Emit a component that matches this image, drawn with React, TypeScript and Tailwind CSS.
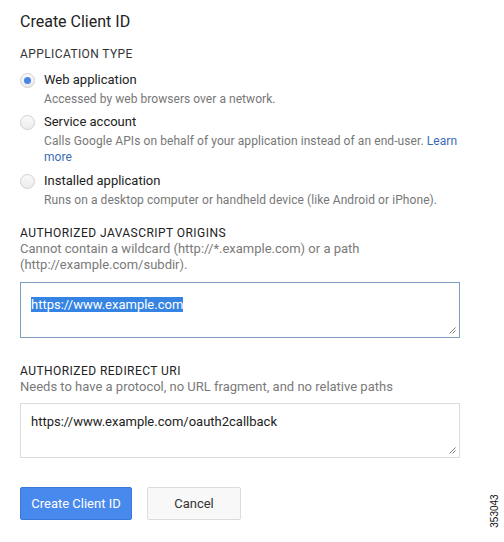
import React from "react";

const Grip = () => (
  <svg className="absolute right-[3px] bottom-[3px]" width="8" height="8" viewBox="0 0 8 8">
    <path d="M7.5 1.5 L1.5 7.5 M7.5 4.5 L4.5 7.5" stroke="#777" strokeWidth="1" />
  </svg>
);

const Radio = ({ checked }: { checked?: boolean }) => (
  <div className="w-[15px] h-[15px] rounded-full border border-[#d0d0d0] bg-gradient-to-b from-[#fafafa] to-[#ececec] flex items-center justify-center shrink-0 mt-[2px]">
    {checked && <div className="w-[7px] h-[7px] rounded-full bg-[#4a86e8]" />}
  </div>
);

export default function App() {
  return (
    <div
      className="relative w-[504px] h-[542px] bg-white pl-[20px] pt-[12px] text-[#222]"
      style={{ fontFamily: "Roboto, 'Liberation Sans', Arial, sans-serif" }}
    >
      <div className="text-[16px] leading-[20px] text-[#222]">Create Client ID</div>

      <div className="mt-[14px] text-[12px] leading-[16px] tracking-[0.4px] text-[#333]">APPLICATION TYPE</div>

      <div className="mt-[9px] flex gap-[9px]">
        <Radio checked />
        <div>
          <div className="text-[13px] leading-[18px] text-[#222]">Web application</div>
          <div className="mt-[2px] text-[12px] leading-[16px] tracking-[0.05px] text-[#777]">Accessed by web browsers over a network.</div>
        </div>
      </div>

      <div className="mt-[6px] flex gap-[9px]">
        <Radio />
        <div className="w-[420px]">
          <div className="text-[13px] leading-[18px] text-[#222]">Service account</div>
          <div className="mt-[2px] text-[12px] leading-[16px] tracking-[0.08px] text-[#777]">
            Calls Google APIs on behalf of your application instead of an end-user.{" "}
            <span className="text-[#3b6cb4]">Learn</span>
            <br />
            <span className="text-[#3b6cb4]">more</span>
          </div>
        </div>
      </div>

      <div className="mt-[7px] flex gap-[9px]">
        <Radio />
        <div>
          <div className="text-[13px] leading-[18px] text-[#222]">Installed application</div>
          <div className="mt-[2px] text-[12px] leading-[16px] tracking-[0.08px] text-[#777]">
            Runs on a desktop computer or handheld device (like Android or iPhone).
          </div>
        </div>
      </div>

      <div className="mt-[17px] text-[12px] leading-[16px] tracking-[0.45px] text-[#222]">AUTHORIZED JAVASCRIPT ORIGINS</div>
      <div className="text-[13px] leading-[16px] text-[#7a7a7a] w-[360px]">
        Cannot contain a wildcard (http://*.example.com) or a path
        <br />
        (http://example.com/subdir).
      </div>

      <div className="relative mt-[9px] w-[440px] h-[56px] border border-[#7f9cc0] pl-[10px] pt-[9px]">
        <span className="bg-[#3584e4] text-white text-[13px] leading-[16px]">https://www.example.com</span>
        <Grip />
      </div>

      <div className="mt-[25px] text-[12px] leading-[16px] tracking-[0.45px] text-[#222]">AUTHORIZED REDIRECT URI</div>
      <div className="text-[13px] leading-[16px] text-[#7a7a7a]">
        Needs to have a protocol, no URL fragment, and no relative paths
      </div>

      <div className="relative mt-[8px] w-[440px] h-[55px] border border-[#dcdcdc] pl-[10px] pt-[9px] text-[13px] leading-[18px] text-[#222]">
        https://www.example.com/oauth2callback
        <Grip />
      </div>

      <div className="mt-[29px] flex gap-[15px]">
        <button className="w-[112px] h-[33px] rounded-[2px] bg-[#4889ee] border border-[#3a78d8] text-white text-[13px]">
          Create Client ID
        </button>
        <button className="w-[94px] h-[33px] rounded-[2px] bg-[#f8f8f8] border border-[#dcdcdc] text-[#333] text-[13px]">
          Cancel
        </button>
      </div>

      <div
        className="absolute left-[478px] top-[506px] -rotate-90 origin-center text-[10px] leading-[10px] text-[#111]"
        style={{ fontFamily: "'Liberation Sans', Arial, sans-serif" }}
      >
        353043
      </div>
    </div>
  );
}
